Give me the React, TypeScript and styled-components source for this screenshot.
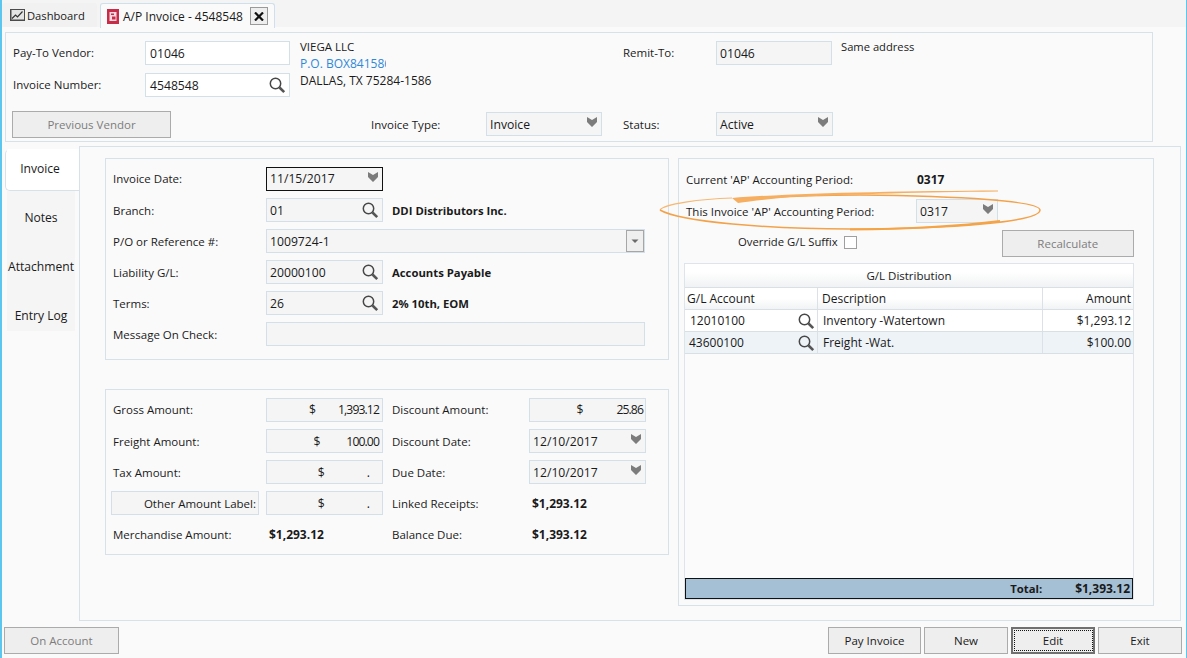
import React from "react";
import styled, { createGlobalStyle } from "styled-components";

const Global = createGlobalStyle`
  html, body { margin: 0; padding: 0; background: #fafafa; }
  * { box-sizing: border-box; }
`;

const Page = styled.div`
  width: 1187px;
  height: 658px;
  overflow: hidden;
  display: flex;
  flex-direction: column;
  background: #fafafa;
  border-left: 2px solid #5cc6ee;
  border-right: 1px solid #5cc6ee;
  font-family: "Open Sans", "Noto Sans", sans-serif;
  font-size: 11.5px;
  color: #1a1a1a;
`;

const TabStrip = styled.div`
  height: 27px;
  padding-top: 2px;
  display: flex;
  align-items: flex-end;
  gap: 3px;
  background: #f4f4f4;
  flex: none;
`;

const TopTab = styled.div<{ $active?: boolean }>`
  height: ${(p) => (p.$active ? 25 : 24)}px;
  width: ${(p) => (p.$active ? 175 : 95)}px;
  padding-left: ${(p) => (p.$active ? 6 : 8)}px;
  display: flex;
  align-items: center;
  gap: ${(p) => (p.$active ? 4 : 2)}px;
  white-space: nowrap;
  font-size: ${(p) => (p.$active ? 12 : 11.2)}px;
  background: ${(p) => (p.$active ? "#fafafa" : "#f1f1f1")};
  border: ${(p) => (p.$active ? "1px solid #cfdfec" : "0")};
  border-bottom: 0;
  border-radius: 3px 3px 0 0;
  margin-bottom: ${(p) => (p.$active ? -1 : 0)}px;
  position: relative;
  & > svg { flex: none; }
`;

const CloseBox = styled.span`
  width: 18px;
  height: 18px;
  margin-left: 3px;
  border: 1px solid #9a9a9a;
  background: #eeeeee;
  display: flex;
  align-items: center;
  justify-content: center;
  flex: none;
`;

const VendorPanel = styled.section`
  width: 1148px;
  height: 110px;
  margin: 5px 0 0 3px;
  padding: 8px 0 0 7px;
  border: 1px solid #d6e1ea;
  flex: none;
`;

const VendorGrid = styled.div`
  display: grid;
  grid-template-columns: 132px 145px 10px 323px 93px 116px 9px 1fr;
  grid-template-rows: 24px 24px;
  row-gap: 8px;
  align-items: center;
  & > span { margin-bottom: 2px; }
`;

const Address = styled.div`
  grid-column: 4;
  grid-row: 1 / span 2;
  align-self: start;
  display: flex;
  flex-direction: column;
  line-height: 17px;
  margin-top: -3px;
  white-space: nowrap;
`;

const AddressClip = styled.span`
  width: 86px;
  overflow: hidden;
  color: #2f88d8;
  font-size: 12px;
`;

const AddressLine = styled.span`
  font-size: 12px;
`;

const SameAddress = styled.span`
  grid-column: 8;
  grid-row: 1;
  align-self: start;
  line-height: 17px;
  margin-top: -3px;
  font-size: 11.2px;
  white-space: nowrap;
`;

const VendorLower = styled.div`
  display: grid;
  grid-template-columns: 159px 200px 115px 116px 21px 93px 117px;
  align-items: center;
  margin: 14px 0 0 -1px;
  & > :not(:first-child) { margin-top: 1px; margin-bottom: 2px; }
`;

const Label = styled.span<{ $col?: number }>`
  white-space: nowrap;
  ${(p) => (p.$col ? `grid-column: ${p.$col};` : "")}
`;

const Strong = styled.span<{ $num?: boolean; $pad?: number }>`
  font-weight: 700;
  white-space: nowrap;
  font-size: ${(p) => (p.$num ? 12 : 11.3)}px;
  padding-left: ${(p) => p.$pad ?? 0}px;
`;

const Field = styled.div<{ $white?: boolean; $focus?: boolean; $col?: number }>`
  height: 24px;
  display: flex;
  align-items: center;
  justify-content: space-between;
  padding: 0 3px 0 ${(p) => (p.$white ? 4 : 3)}px;
  background: ${(p) => (p.$white ? "#ffffff" : "#f5f5f5")};
  border: 1px solid ${(p) => (p.$focus ? "#111111" : "#d3dfe9")};
  font-size: 12.2px;
  white-space: nowrap;
  ${(p) => (p.$col ? `grid-column: ${p.$col};` : "")}
`;

const Money = styled(Field)<{ $gap: number; $right: number }>`
  justify-content: flex-end;
  gap: ${(p) => p.$gap}px;
  padding-right: ${(p) => p.$right}px;
`;

const MoneyValue = styled.span`
  letter-spacing: -0.9px;
`;

const Button = styled.div<{ $w?: number; $disabled?: boolean; $default?: boolean }>`
  width: ${(p) => (p.$w ? `${p.$w}px` : "100%")};
  height: 27px;
  display: flex;
  align-items: center;
  justify-content: center;
  background: #eeeeee;
  border: ${(p) => (p.$default ? "2px solid #707070" : "1px solid #ababab")};
  color: ${(p) => (p.$disabled ? "#7d7d7d" : "#1a1a1a")};
  font-size: 11.5px;
  white-space: nowrap;
  flex: none;
`;

const FocusDots = styled.span`
  width: 79px;
  height: 21px;
  display: flex;
  align-items: center;
  justify-content: center;
  border: 1px dotted #111111;
`;

const Body = styled.div`
  display: flex;
  margin-top: 4px;
  flex: none;
`;

const SideTabs = styled.nav`
  width: 74px;
  height: 182px;
  overflow: hidden;
  margin: 3px 0 0 3px;
  display: flex;
  flex-direction: column;
  flex: none;
`;

const SideTab = styled.div<{ $active?: boolean }>`
  height: ${(p) => (p.$active ? 42 : 49)}px;
  width: ${(p) => (p.$active ? 74 : 68)}px;
  margin-left: ${(p) => (p.$active ? 0 : 2)}px;
  padding: ${(p) => (p.$active ? "0 5px 4px 0" : "4px 0 0")};
  display: flex;
  align-items: center;
  justify-content: center;
  font-size: 12.1px;
  white-space: nowrap;
  background: ${(p) => (p.$active ? "#ffffff" : "#f5f5f5")};
  border: ${(p) => (p.$active ? "1px solid #d6e1ea" : "0")};
  border-top-color: #ffffff;
  border-right: 0;
  border-radius: ${(p) => (p.$active ? "5px 0 0 5px" : "0")};
  flex: none;
`;

const Main = styled.main`
  width: 1102px;
  height: 475px;
  padding: 11px 0 0 25px;
  border: 1px solid #d6e1ea;
  display: grid;
  grid-template-columns: 564px 476px;
  column-gap: 9px;
  align-items: start;
`;

const LeftColumn = styled.div`
  display: flex;
  flex-direction: column;
  gap: 29px;
`;

const Panel = styled.section<{ $h: number }>`
  height: ${(p) => p.$h}px;
  border: 1px solid #d6e1ea;
`;

const HeaderForm = styled(Panel)`
  padding: 8px 0 0 7px;
  display: grid;
  grid-template-columns: 153px 117px 1fr;
  grid-auto-rows: 24px;
  row-gap: 7px;
  align-items: center;
  & > :nth-child(-n + 2) { margin-bottom: 1px; }
`;

const SpanField = styled(Field)`
  grid-column: 2 / span 2;
  width: 379px;
`;

const AmountForm = styled(Panel)`
  padding: 8px 0 0 7px;
  display: grid;
  grid-template-columns: 153px 117px 9px 137px 117px;
  grid-auto-rows: 24px;
  row-gap: 7px;
  align-items: center;
  & > :nth-child(-n + 4) { padding-bottom: 2px; }
`;

const LabelBox = styled.div`
  height: 24px;
  width: 148px;
  margin-left: -2px;
  padding-right: 2px;
  display: flex;
  align-items: center;
  justify-content: flex-end;
  background: #f5f5f5;
  border: 1px solid #d3dfe9;
  white-space: nowrap;
`;

const RightPanel = styled.section`
  height: 448px;
  border: 1px solid #d6e1ea;
  padding: 8px 19px 0 5px;
  display: flex;
  flex-direction: column;
  position: relative;
`;

const PeriodRow = styled.div<{ $second?: boolean }>`
  display: grid;
  grid-template-columns: 230px 82px;
  align-items: center;
  padding-left: 2px;
  height: 24px;
  margin-top: ${(p) => (p.$second ? 8 : 0)}px;
  flex: none;
`;

const OverrideRow = styled.div`
  display: flex;
  align-items: flex-start;
  height: 27px;
  margin-top: 7px;
  padding-left: 54px;
  flex: none;
`;

const OverrideLabel = styled.span`
  margin-top: 4px;
  white-space: nowrap;
  font-size: 11.3px;
`;

const Check = styled.span`
  width: 13px;
  height: 13px;
  margin: 6px 145px 0 6px;
  background: #fff;
  border: 1px solid #9f9f9f;
  flex: none;
`;

const GLTable = styled.div`
  flex: 1;
  margin: 6px 0 5px 0;
  background: #fbfbfb;
  border: 1px solid #dde4ea;
  display: flex;
  flex-direction: column;
`;

const GLTitle = styled.div`
  height: 24px;
  display: flex;
  align-items: center;
  justify-content: center;
  border-bottom: 1px solid #d8dfe5;
  background: linear-gradient(#ffffff 35%, #f0f2f3);
  flex: none;
`;

const GLRow = styled.div<{ $alt?: boolean; $head?: boolean }>`
  height: 22px;
  display: grid;
  grid-template-columns: 133px 225px 1fr;
  background: ${(p) => (p.$head ? "linear-gradient(#ffffff 50%, #f1f3f4)" : p.$alt ? "#edf3f7" : "#ffffff")};
  border-bottom: 1px solid #d8dfe5;
  flex: none;
`;

const GLCell = styled.div<{ $right?: boolean; $pad?: number }>`
  display: flex;
  align-items: center;
  justify-content: ${(p) => (p.$right ? "flex-end" : "space-between")};
  padding: 0 2px 0 ${(p) => p.$pad ?? 2}px;
  border-right: 1px solid #dbe1e6;
  font-size: 12px;
  white-space: nowrap;
  &:last-child { border-right: 0; }
`;

const TotalBar = styled.div`
  margin-top: auto;
  height: 21px;
  display: flex;
  align-items: center;
  justify-content: flex-end;
  gap: 33px;
  padding-right: 2px;
  background: #a5bfd4;
  border: 1px solid #111111;
  font-weight: 700;
  font-size: 12px;
  flex: none;
`;

const TotalLabel = styled.span`
  font-size: 11.3px;
`;

const Annotation = styled.svg`
  position: absolute;
  left: -29px;
  top: 26px;
  width: 400px;
  height: 50px;
  pointer-events: none;
`;

const Footer = styled.footer`
  display: flex;
  align-items: flex-start;
  gap: 3px;
  margin-top: 6px;
  padding: 0 4px 0 2px;
  flex: none;
`;

const FooterSpacer = styled.div`
  flex: 1;
`;

const Magnifier = () => (
  <svg width="18" height="18" viewBox="0 0 18 18" aria-hidden="true">
    <circle cx="7.5" cy="7.5" r="5.2" fill="none" stroke="#474747" strokeWidth="1.5" />
    <line x1="11.5" y1="11.5" x2="16.2" y2="16.2" stroke="#555555" strokeWidth="2.6" />
  </svg>
);

const ChevronMark = styled.svg`
  width: 12px;
  height: 10px;
  margin-bottom: 4px;
  flex: none;
`;

const Chevron = () => (
  <ChevronMark viewBox="0 0 12 10" aria-hidden="true">
    <polygon points="1,0 6,3 11,0 11,5 6,10 1,5" fill="#7c7c7c" />
  </ChevronMark>
);

const ComboMark = styled.svg`
  width: 18px;
  height: 22px;
  margin-right: -3px;
  flex: none;
`;

const ComboArrow = () => (
  <ComboMark viewBox="0 0 18 22" aria-hidden="true">
    <rect x="0.5" y="0.5" width="17" height="21" fill="#efefef" stroke="#a6a6a6" />
    <polygon points="5.5,9.5 12.5,9.5 9,13" fill="#6b6b6b" />
  </ComboMark>
);

const ChartIcon = () => (
  <svg width="15" height="12" viewBox="0 0 15 12" aria-hidden="true">
    <rect width="15" height="12" fill="#4b4b4b" />
    <rect x="1.5" y="1" width="12.5" height="9.5" fill="#e4e4e4" />
    <polyline points="2,9.5 5.5,6 7.5,8 12.5,2.5" fill="none" stroke="#333333" strokeWidth="1.2" />
  </svg>
);

const InvoiceIcon = () => (
  <svg width="12" height="15" viewBox="0 0 12 15" aria-hidden="true">
    <rect width="12" height="15" fill="#c72c48" />
    <rect x="2.5" y="3" width="7" height="9" fill="#f7d9df" />
    <rect x="4" y="4.5" width="3" height="1.5" fill="#c72c48" />
    <rect x="5" y="7.5" width="3.5" height="3" fill="#c72c48" />
  </svg>
);

const CloseIcon = () => (
  <svg width="10" height="9" viewBox="0 0 10 9" aria-hidden="true">
    <path d="M1 .5 L9 8.5 M9 .5 L1 8.5" stroke="#111111" strokeWidth="2.2" />
  </svg>
);

const glRows = [
  { account: "12010100", pad: 5, description: "Inventory -Watertown", amount: "$1,293.12", alt: false },
  { account: "43600100", pad: 4, description: "Freight -Wat.", amount: "$100.00", alt: true },
];

export default function App() {
  return (
    <Page>
      <Global />
      <TabStrip>
        <TopTab>
          <ChartIcon />
          Dashboard
        </TopTab>
        <TopTab $active>
          <InvoiceIcon />
          A/P Invoice - 4548548
          <CloseBox>
            <CloseIcon />
          </CloseBox>
        </TopTab>
      </TabStrip>

      <VendorPanel>
        <VendorGrid>
          <Label>Pay-To Vendor:</Label>
          <Field $white>01046</Field>
          <Address>
            <span>VIEGA LLC</span>
            <AddressClip>P.O. BOX841586</AddressClip>
            <AddressLine>DALLAS, TX 75284-1586</AddressLine>
          </Address>
          <Label $col={5}>Remit-To:</Label>
          <Field>01046</Field>
          <SameAddress>Same address</SameAddress>
          <Label $col={1}>Invoice Number:</Label>
          <Field $white $col={2}>
            4548548
            <Magnifier />
          </Field>
        </VendorGrid>
        <VendorLower>
          <Button $disabled>Previous Vendor</Button>
          <Label $col={3}>Invoice Type:</Label>
          <Field $col={4}>
            Invoice
            <Chevron />
          </Field>
          <Label $col={6}>Status:</Label>
          <Field $col={7}>
            Active
            <Chevron />
          </Field>
        </VendorLower>
      </VendorPanel>

      <Body>
        <SideTabs>
          <SideTab $active>Invoice</SideTab>
          <SideTab>Notes</SideTab>
          <SideTab>Attachment</SideTab>
          <SideTab>Entry Log</SideTab>
        </SideTabs>
        <Main>
          <LeftColumn>
            <HeaderForm $h={202}>
              <Label>Invoice Date:</Label>
              <Field $focus>
                11/15/2017
                <Chevron />
              </Field>
              <span />
              <Label>Branch:</Label>
              <Field>
                01
                <Magnifier />
              </Field>
              <Strong $pad={9}>DDI Distributors Inc.</Strong>
              <Label>P/O or Reference #:</Label>
              <SpanField>
                1009724-1
                <ComboArrow />
              </SpanField>
              <Label>Liability G/L:</Label>
              <Field>
                20000100
                <Magnifier />
              </Field>
              <Strong $pad={9}>Accounts Payable</Strong>
              <Label>Terms:</Label>
              <Field>
                26
                <Magnifier />
              </Field>
              <Strong $pad={9}>2% 10th, EOM</Strong>
              <Label>Message On Check:</Label>
              <SpanField />
            </HeaderForm>
            <AmountForm $h={166}>
              <Label>Gross Amount:</Label>
              <Money $gap={22} $right={3}>
                <span>$</span>
                <MoneyValue>1,393.12</MoneyValue>
              </Money>
              <Label $col={4}>Discount Amount:</Label>
              <Money $gap={33} $right={2}>
                <span>$</span>
                <MoneyValue>25.86</MoneyValue>
              </Money>
              <Label>Freight Amount:</Label>
              <Money $gap={26} $right={3}>
                <span>$</span>
                <MoneyValue>100.00</MoneyValue>
              </Money>
              <Label $col={4}>Discount Date:</Label>
              <Field>
                12/10/2017
                <Chevron />
              </Field>
              <Label>Tax Amount:</Label>
              <Money $gap={42} $right={12}>
                <span>$</span>
                <span>.</span>
              </Money>
              <Label $col={4}>Due Date:</Label>
              <Field>
                12/10/2017
                <Chevron />
              </Field>
              <LabelBox>Other Amount Label:</LabelBox>
              <Money $gap={42} $right={12}>
                <span>$</span>
                <span>.</span>
              </Money>
              <Label $col={4}>Linked Receipts:</Label>
              <Strong $num $pad={3}>$1,293.12</Strong>
              <Label>Merchandise Amount:</Label>
              <Strong $num $pad={3}>$1,293.12</Strong>
              <Label $col={4}>Balance Due:</Label>
              <Strong $num $pad={3}>$1,393.12</Strong>
            </AmountForm>
          </LeftColumn>

          <RightPanel>
            <PeriodRow>
              <Label>Current 'AP' Accounting Period:</Label>
              <Strong $num $pad={1}>0317</Strong>
            </PeriodRow>
            <PeriodRow $second>
              <Label>This Invoice 'AP' Accounting Period:</Label>
              <Field>
                0317
                <Chevron />
              </Field>
            </PeriodRow>
            <OverrideRow>
              <OverrideLabel>Override G/L Suffix</OverrideLabel>
              <Check />
              <Button $w={132} $disabled>
                Recalculate
              </Button>
            </OverrideRow>
            <GLTable>
              <GLTitle>G/L Distribution</GLTitle>
              <GLRow $head>
                <GLCell>G/L Account</GLCell>
                <GLCell $pad={4}>Description</GLCell>
                <GLCell $right>Amount</GLCell>
              </GLRow>
              {glRows.map((row) => (
                <GLRow key={row.account} $alt={row.alt}>
                  <GLCell $pad={row.pad}>
                    {row.account}
                    <Magnifier />
                  </GLCell>
                  <GLCell $pad={5}>{row.description}</GLCell>
                  <GLCell $right>{row.amount}</GLCell>
                </GLRow>
              ))}
              <TotalBar>
                <TotalLabel>Total:</TotalLabel>
                <span>$1,393.12</span>
              </TotalBar>
            </GLTable>
            <Annotation viewBox="650 185 400 50" aria-hidden="true">
              <path
                d="M660 210 C664 204 700 199 732 198"
                fill="none"
                stroke="#f6b873"
                strokeWidth="1.2"
              />
              <path
                d="M660 210 C680 222 770 229 850 229 C950 229 1040 222 1040 210 C1040 201 960 196 860 195 C810 195 770 197 738 200"
                fill="none"
                stroke="#f3a24a"
                strokeWidth="1.5"
              />
              <path
                d="M850 229.5 C900 229 960 226 1000 221"
                fill="none"
                stroke="#f5a445"
                strokeWidth="2"
              />
              <path
                d="M732 198 C790 193 900 191 998 190.4 L998 191.4 C920 192 860 194 790 197 C770 199 750 201 738 203 Z"
                fill="#f6ae60"
              />
            </Annotation>
          </RightPanel>
        </Main>
      </Body>

      <Footer>
        <Button $w={115} $disabled>
          On Account
        </Button>
        <FooterSpacer />
        <Button $w={93}>Pay Invoice</Button>
        <Button $w={84}>New</Button>
        <Button $w={84} $default>
          <FocusDots>Edit</FocusDots>
        </Button>
        <Button $w={84}>Exit</Button>
      </Footer>
    </Page>
  );
}
